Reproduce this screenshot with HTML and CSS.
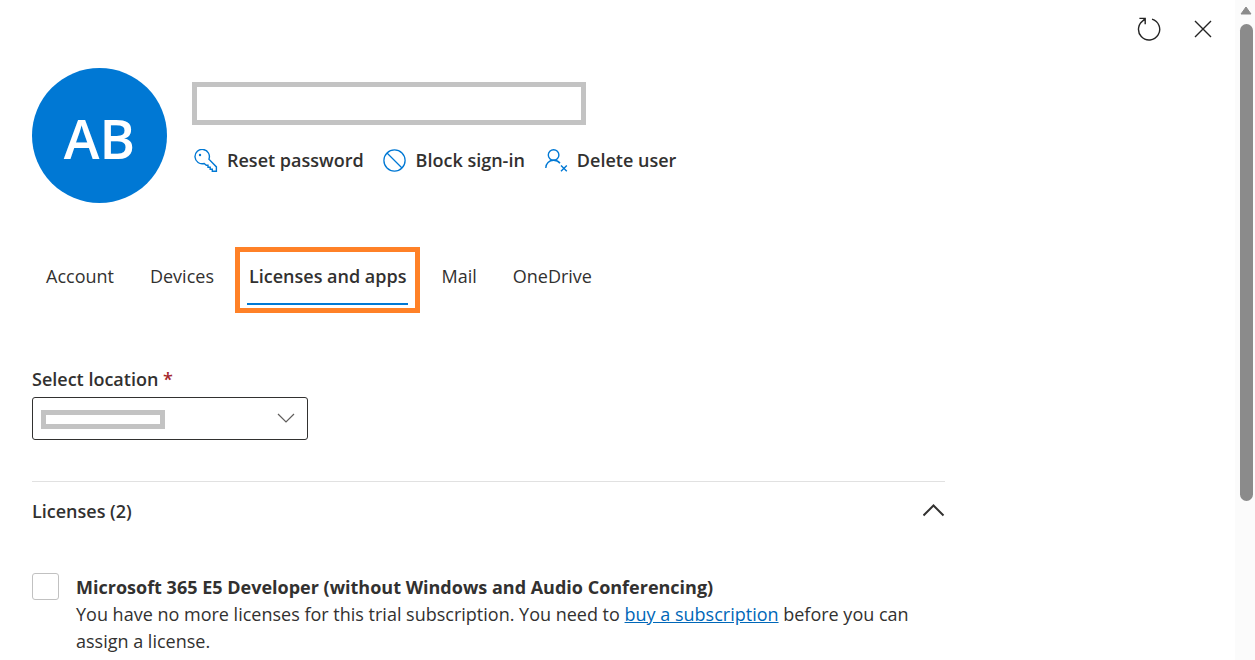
FILE: index.html
```html
<!DOCTYPE html>
<html lang="en">
<head>
<meta charset="utf-8">
<title>User details</title>
<link rel="stylesheet" href="styles.css">
</head>
<body>
<div class="panel">
  <main class="panel-body">
    <div class="panel-actions">
      <button class="icon-button" type="button" aria-label="Refresh">
        <svg width="24" height="26" viewBox="0 0 24 26" fill="none" stroke="#242424" stroke-width="1.4"><path d="M15 3.2A10.6 10.6 0 1 1 7.4 3.9M2.4 2.4H8.2V8.2M8.2 2.4L3.6 7"/></svg>
      </button>
      <button class="icon-button" type="button" aria-label="Close">
        <svg width="18" height="18" viewBox="0 0 18 18" fill="none" stroke="#242424" stroke-width="1.4"><path d="M1 1L17 17M17 1L1 17"/></svg>
      </button>
    </div>
    <header class="user-header">
      <div class="avatar">AB</div>
      <div class="user-info">
        <div class="user-name"></div>
        <div class="commands">
          <button class="command" type="button">
            <svg width="24" height="24" viewBox="0 0 24 24" fill="none" stroke="#0078d4" stroke-width="1.4"><path d="M14.9 10.2A7.2 7.2 0 1 0 10.2 14.5L12.3 16.2H14V18.2H16.2V20.2H18.3V22.3H22.4V17.9Z"/><circle cx="6" cy="6" r="1.2" fill="#0078d4" stroke="none"/></svg>
            Reset password
          </button>
          <button class="command" type="button">
            <svg width="24" height="24" viewBox="0 0 24 24" fill="none" stroke="#0078d4" stroke-width="1.3"><circle cx="11.5" cy="11.5" r="10.6"/><path d="M4 4L19 19"/></svg>
            Block sign-in
          </button>
          <button class="command" type="button">
            <svg width="24" height="24" viewBox="0 0 24 24" fill="none" stroke="#0078d4" stroke-width="1.4"><circle cx="9.6" cy="6" r="5.3"/><path d="M1.8 19C1.8 14.4 5.1 11.3 9.6 11.3C12.4 11.3 14.6 12.4 16 14.2M17 16.4L22.8 22.2M22.8 16.4L17 22.2"/></svg>
            Delete user
          </button>
        </div>
      </div>
    </header>
    <nav class="tabs" role="tablist">
      <button class="tab" type="button" role="tab" aria-selected="false">Account</button>
      <button class="tab" type="button" role="tab" aria-selected="false">Devices</button>
      <button class="tab tab-active" type="button" role="tab" aria-selected="true">Licenses and apps</button>
      <button class="tab" type="button" role="tab" aria-selected="false">Mail</button>
      <button class="tab" type="button" role="tab" aria-selected="false">OneDrive</button>
    </nav>
    <section class="location">
      <label class="label" for="location">Select location <span class="required">*</span></label>
      <div class="select-wrap">
        <select class="select" id="location" required><option></option></select>
        <span class="masked-value"></span>
        <svg class="select-chevron" width="18" height="10" viewBox="0 0 18 10" fill="none" stroke="#605e5c" stroke-width="1.2"><path d="M1 1L9 9L17 1"/></svg>
      </div>
    </section>
    <section class="licenses">
      <button class="section-toggle" type="button" aria-expanded="true">
        Licenses (2)
        <svg width="22" height="14" viewBox="0 0 22 14" fill="none" stroke="#323130" stroke-width="2"><path d="M0.5 11.5L10.5 1.5L20.5 11.5"/></svg>
      </button>
      <div class="license">
        <input class="checkbox" type="checkbox" id="license-e5">
        <div class="license-text">
          <label class="license-name" for="license-e5">Microsoft 365 E5 Developer (without Windows and Audio Conferencing)</label>
          <p class="license-note">You have no more licenses for this trial subscription. You need to <a class="link" href="#">buy a subscription</a> before you can assign a license.</p>
        </div>
      </div>
    </section>
  </main>
  <div class="scrollbar" aria-hidden="true">
    <svg width="12" height="9" viewBox="0 0 12 9"><path d="M6 1L11 8H1Z" fill="#8b8b8b" stroke="#8b8b8b" stroke-linejoin="round"/></svg>
    <div class="scroll-thumb"></div>
  </div>
</div>
</body>
</html>
```
FILE: styles.css
```css
* {
  box-sizing: border-box;
}

body {
  margin: 0;
  background: #fff;
  color: #323130;
  font: 18px/27px "Segoe UI", "Open Sans", "Noto Sans", sans-serif;
}

button {
  padding: 0;
  border: 0;
  background: none;
  color: inherit;
  font: inherit;
}

svg {
  display: block;
  flex: none;
}

.panel {
  display: flex;
  height: 100vh;
  overflow: hidden;
}

.panel-body {
  flex: 1;
  padding: 0 23px 0 32px;
}

.panel-actions {
  display: flex;
  justify-content: flex-end;
  align-items: center;
  gap: 33px;
  height: 68px;
  padding-bottom: 10px;
}

.user-header {
  display: flex;
  gap: 25px;
}

.avatar {
  display: flex;
  align-items: center;
  justify-content: center;
  width: 135px;
  height: 135px;
  padding-top: 6px;
  border-radius: 50%;
  background: #0078d4;
  color: #fff;
  font-size: 54px;
  font-weight: 600;
}

.user-info {
  padding-top: 14px;
}

.user-name {
  width: 394px;
  height: 43px;
  border: 5px solid #c3c3c3;
}

.commands {
  display: flex;
  gap: 19px;
  margin-top: 22px;
  padding-left: 2px;
}

.command {
  display: flex;
  align-items: center;
  gap: 9px;
  font-weight: 600;
}

.tabs {
  display: flex;
  gap: 10px;
  margin-top: 44px;
  padding-left: 1px;
}

.tab {
  position: relative;
  height: 66px;
  padding: 0 13px 8px;
}

.tab-active {
  padding: 0 12px 8px;
  font-weight: 600;
}

.tab-active::before {
  content: "";
  position: absolute;
  inset: 0 -2px;
  border: 5px solid #ff8127;
}

.tab-active::after {
  content: "";
  position: absolute;
  right: 10px;
  bottom: 8px;
  left: 10px;
  height: 2px;
  background: #0078d4;
}

.location {
  margin-top: 53px;
}

.label {
  display: block;
  font-weight: 600;
}

.required {
  color: #a4262c;
}

.select-wrap {
  position: relative;
  width: 276px;
  margin-top: 4px;
}

.select {
  display: block;
  width: 100%;
  height: 43px;
  border: 1px solid #323130;
  border-radius: 3px;
  background: #fff;
  font: inherit;
  appearance: none;
}

.masked-value {
  position: absolute;
  top: 13px;
  left: 9px;
  width: 124px;
  height: 19px;
  border: 5px solid #c3c3c3;
  pointer-events: none;
}

.select-chevron {
  position: absolute;
  top: 16px;
  right: 13px;
  pointer-events: none;
}

.licenses {
  max-width: 913px;
  margin-top: 41px;
  border-top: 1px solid #e1e1e1;
}

.section-toggle {
  display: flex;
  align-items: center;
  justify-content: space-between;
  width: 100%;
  height: 58px;
  font-weight: 600;
}

.license {
  display: flex;
  gap: 17px;
  margin-top: 33px;
}

.license-text {
  padding-top: 1px;
}

.checkbox {
  flex: none;
  width: 27px;
  height: 27px;
  margin: 0;
  border: 1px solid #c1c1c1;
  border-radius: 3px;
  background: #fff;
  appearance: none;
}

.license-name {
  display: block;
  font-weight: 700;
}

.license-note {
  margin: 0;
}

.link {
  color: #0067b8;
}

.scrollbar {
  display: flex;
  flex-direction: column;
  align-items: center;
  gap: 9px;
  width: 20px;
  padding: 6px 0 0 2px;
  background: #fbfbfb;
}

.scroll-thumb {
  width: 13px;
  height: 73%;
  border-radius: 7px;
  background: #8b8b8b;
}
```
